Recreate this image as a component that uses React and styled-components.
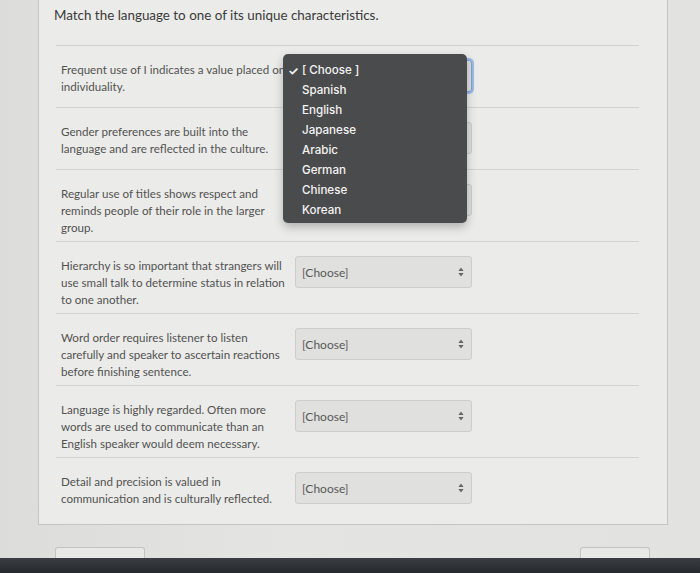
import React from "react";
import styled, { createGlobalStyle } from "styled-components";

const GlobalStyle = createGlobalStyle`
  html, body {
    margin: 0;
    padding: 0;
  }
  body {
    background: #e2e2e0;
    font-family: Lato, "Open Sans", sans-serif;
    height: 573px;
    overflow: hidden;
  }
`;

const items = [
  {
    text: "Frequent use of I indicates a value placed on individuality.",
    open: true,
  },
  { text: "Gender preferences are built into the language and are reflected in the culture.", covered: true },
  { text: "Regular use of titles shows respect and reminds people of their role in the larger group.", covered: true },
  { text: "Hierarchy is so important that strangers will use small talk to determine status in relation to one another." },
  { text: "Word order requires listener to listen carefully and speaker to ascertain reactions before finishing sentence." },
  { text: "Language is highly regarded. Often more words are used to communicate than an English speaker would deem necessary." },
  { text: "Detail and precision is valued in communication and is culturally reflected." },
];

const options = ["[ Choose ]", "Spanish", "English", "Japanese", "Arabic", "German", "Chinese", "Korean"];

const Arrows = () => (
  <svg width="6" height="10" viewBox="0 0 6 10">
    <path d="M3 0.5 L5.6 4 H0.4 Z" fill="#666" />
    <path d="M3 9.5 L5.6 6 H0.4 Z" fill="#666" />
  </svg>
);

const App = () => {
  return (
    <Page>
      <GlobalStyle />
      <Card>
        <Title>Match the language to one of its unique characteristics.</Title>
        <List>
          {items.map((item, i) => (
            <Row key={i}>
              <Prompt>{item.text}</Prompt>
              <SelectWrap>
                <Select focused={item.open}>
                  {/* label sits under the open menu on the first rows */}
                  {!item.open && !item.covered && <span>[Choose]</span>}
                  <span />
                  <Arrows />
                </Select>
                {item.open && (
                  <Menu>
                    {options.map((opt, j) => (
                      <MenuItem key={opt}>
                        <Check>{j === 0 ? "✓" : ""}</Check>
                        {opt}
                      </MenuItem>
                    ))}
                  </Menu>
                )}
              </SelectWrap>
            </Row>
          ))}
        </List>
      </Card>
      <Footer>
        <NavButton width={88} />
        <NavButton width={68} />
      </Footer>
      <Taskbar />
    </Page>
  );
};

const Page = styled.div`
  height: 573px;
  display: flex;
  flex-direction: column;
  background: linear-gradient(90deg, #dcdcda 0%, #e4e4e2 40%, #e2e2e0 100%);
`;

const Card = styled.div`
  margin-left: 38px;
  width: 630px;
  height: 525px;
  box-sizing: border-box;
  border: 1px solid #c4c4c2;
  border-top: none;
  background: #ebebe9;
  padding: 0 28px 0 15px;
`;

const Title = styled.div`
  height: 45px;
  box-sizing: border-box;
  padding-top: 5px;
  font-size: 13.4px;
  line-height: 20px;
  color: #3a3a3a;
`;

const List = styled.div`
  display: flex;
  flex-direction: column;
  margin-left: 2px;
`;

const Row = styled.div`
  display: flex;
  align-items: flex-start;
  gap: 6px;
  min-height: 62px;
  box-sizing: border-box;
  padding: 15px 0 5px 5px;
  border-top: 1px solid #d2d2d0;
`;

const Prompt = styled.div`
  width: 228px;
  font-size: 11.6px;
  line-height: 17px;
  color: #525252;
`;

const SelectWrap = styled.div`
  position: relative;
  margin-top: -1px;
`;

const Select = styled.div`
  width: 177px;
  height: 32px;
  box-sizing: border-box;
  display: flex;
  align-items: center;
  justify-content: space-between;
  padding: 0 7px 0 6px;
  background: #e0e0de;
  border: 1px solid ${(p) => (p.focused ? "#7ea3d6" : "#cdcdcb")};
  border-radius: 3px;
  box-shadow: ${(p) => (p.focused ? "0 0 0 2px #9dbbe6" : "none")};
  font-size: 12px;
  color: #585858;
`;

const Menu = styled.div`
  position: absolute;
  left: -12px;
  top: -6px;
  width: 184px;
  height: 169px;
  box-sizing: border-box;
  padding: 6px 0;
  background: #4a4b4d;
  border-radius: 5px;
  box-shadow: 0 4px 10px rgba(0, 0, 0, 0.25);
  z-index: 2;
`;

const MenuItem = styled.div`
  display: flex;
  align-items: center;
  height: 20px;
  font-family: Inter, "Liberation Sans", sans-serif;
  font-size: 11.6px;
  font-weight: 500;
  color: #f4f4f4;
`;

const Check = styled.span`
  width: 14px;
  padding-left: 5px;
  font-size: 12px;
  font-weight: 700;
`;

const Footer = styled.div`
  flex: 1;
  display: flex;
  justify-content: space-between;
  align-items: flex-end;
  padding: 0 50px 0 55px;
`;

const NavButton = styled.div`
  width: ${(p) => p.width}px;
  height: 10px;
  border: 1px solid #c2c2c0;
  border-bottom: none;
  border-radius: 3px 3px 0 0;
  background: #e8e8e6;
`;

const Taskbar = styled.div`
  height: 15px;
  background: linear-gradient(180deg, #3a3e43 0%, #262a2e 100%);
`;

export default App;
